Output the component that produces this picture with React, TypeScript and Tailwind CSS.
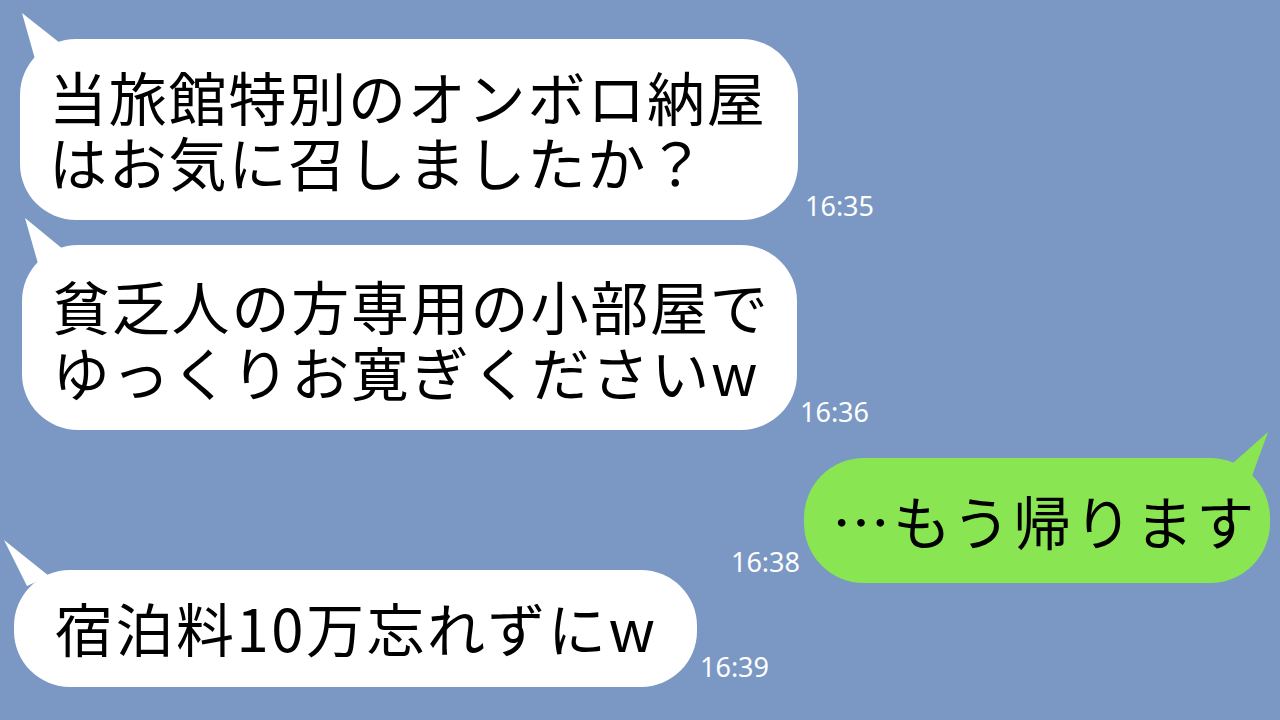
import React from 'react';

type Side = 'left' | 'right';

// little pointed tail that sits over the bubble's top corner
function Tail({ side, color, points }: { side: Side; color: string; points: string }) {
  return (
    <svg
      className={`absolute top-[-40px] ${side === 'left' ? 'left-[-20px]' : 'right-[-20px]'}`}
      width="80"
      height="80"
      viewBox="0 0 80 80"
    >
      <polygon points={points} fill={color} />
    </svg>
  );
}

function Time({ label, className }: { label: string; className?: string }) {
  return (
    <span
      className={`text-[27px] leading-[26px] text-white whitespace-nowrap ${className ?? ''}`}
      style={{ fontFamily: '"Noto Sans", "Noto Sans CJK JP", sans-serif' }}
    >
      {label}
    </span>
  );
}

export default function App() {
  const jp = { fontFamily: '"Noto Sans CJK JP", "Noto Sans", sans-serif' };

  return (
    <div className="w-[1280px] h-[720px] overflow-hidden bg-[#7a98c3] flex flex-col" style={jp}>
      {/* 16:35 */}
      <div className="flex items-end mt-[39px] ml-[20px] gap-[7px]">
        <div className="relative bg-white rounded-[56px] w-[778px] h-[181px] pl-[29px] pt-[25px] text-black text-[58px] leading-[65px] tracking-[1.8px]">
          <Tail side="left" color="#ffffff" points="22,14 35,60 60,44" />
          <div className="relative">当旅館特別のオンボロ納屋</div>
          <div className="relative">はお気に召しましたか？</div>
        </div>
        <Time label="16:35" className="mb-[1px]" />
      </div>

      {/* 16:36 */}
      <div className="flex items-end mt-[25px] ml-[22px] gap-[3px]">
        <div className="relative bg-white rounded-[56px] w-[775px] h-[185px] pl-[30px] pt-[27px] text-black text-[58px] leading-[66px] tracking-[1.8px]">
          <Tail side="left" color="#ffffff" points="23,13 37,62 62,45" />
          <div className="relative">貧乏人の方専用の小部屋で</div>
          <div className="relative">ゆっくりお寛ぎくださいw</div>
        </div>
        <Time label="16:36" className="mb-[5px]" />
      </div>

      {/* 16:38 */}
      <div className="flex items-end justify-end mt-[28px] mr-[10px] gap-[4px]">
        <Time label="16:38" className="mb-[8px]" />
        <div className="relative bg-[#8ae552] rounded-[60px] w-[466px] h-[125px] pl-[28px] pt-[30px] text-black text-[58px] leading-[65px] tracking-[3px]">
          <Tail side="right" color="#8ae552" points="58,14 23,45 42,58" />
          <div className="relative">…もう帰ります</div>
        </div>
      </div>

      {/* 16:39 */}
      <div className="flex items-end mt-[-13px] ml-[14px] gap-[3px]">
        <div className="relative bg-white rounded-[56px] w-[683px] h-[117px] pl-[41px] pt-[25px] text-black text-[58px] leading-[65px] tracking-[2.5px]">
          <Tail side="left" color="#ffffff" points="10,10 33,56 55,46" />
          <div className="relative">宿泊料10万忘れずにw</div>
        </div>
        <Time label="16:39" className="mb-[7px]" />
      </div>
    </div>
  );
}
